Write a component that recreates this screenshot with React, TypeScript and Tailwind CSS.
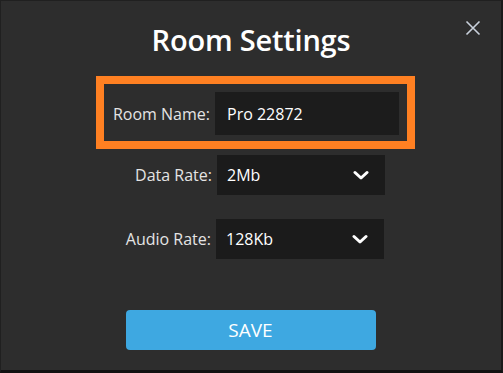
import React from "react";

const Chevron = () => (
  <svg width="16" height="11" viewBox="0 0 16 11" fill="none">
    <polyline points="2,2.5 8,8 14,2.5" stroke="#ffffff" strokeWidth="3" strokeLinecap="round" strokeLinejoin="round" />
  </svg>
);

export default function App() {
  return (
    <div
      className="relative box-border w-[503px] h-[373px] bg-[#2d2d2d] border-l border-t border-[#202020] border-r-2 border-r-[#1a1a1a] border-b-[3px] border-b-[#111111] overflow-hidden"
      style={{ fontFamily: '"Open Sans", "Noto Sans", sans-serif' }}
    >
      <button className="absolute top-[18px] right-[20px] w-[17px] h-[17px] flex items-center justify-center">
        <svg width="16" height="16" viewBox="0 0 16 16" fill="none">
          <path d="M1.5 1.5 L14.5 14.5 M14.5 1.5 L1.5 14.5" stroke="#c9d1dc" strokeWidth="1.6" />
        </svg>
      </button>

      <h1 className="pt-[19px] text-center text-white text-[29px] leading-[39px] font-semibold tracking-[-0.2px]">
        Room Settings
      </h1>

      <div className="flex flex-col pl-[95px] mt-[17px]">
        <div className="box-border w-[319px] border-[8px] border-[#ff8022] pt-[8px] pb-[6px] pr-[8px] pl-[8px] flex items-center">
          <div className="w-[98px] text-right text-[#e4e4e4] text-[16px]">Room Name:</div>
          <div className="ml-[5px] w-[184px] h-[43px] bg-[#1c1c1c] flex items-center pl-[12px] text-white text-[16px]">
            Pro 22872
          </div>
        </div>

        <div className="mt-[6px] flex items-center">
          <div className="w-[116px] text-right text-[#e4e4e4] text-[16px]">Data Rate:</div>
          <div className="ml-[5px] w-[168px] h-[40px] bg-[#1b1b1b] flex items-center justify-between pl-[10px] pr-[16px] text-white text-[16px]">
            <span>2Mb</span>
            <Chevron />
          </div>
        </div>

        <div className="mt-[24px] flex items-center">
          <div className="w-[115px] text-right text-[#e4e4e4] text-[16px]">Audio Rate:</div>
          <div className="ml-[5px] w-[168px] h-[40px] bg-[#1b1b1b] flex items-center justify-between pl-[10px] pr-[16px] text-white text-[16px]">
            <span>128Kb</span>
            <Chevron />
          </div>
        </div>
      </div>

      <div className="mt-[51px] flex justify-center pr-[1px]">
        <button className="w-[250px] h-[40px] rounded-[4px] bg-[#3ea8e1] text-white text-[19px] leading-[40px]">
          SAVE
        </button>
      </div>
    </div>
  );
}
